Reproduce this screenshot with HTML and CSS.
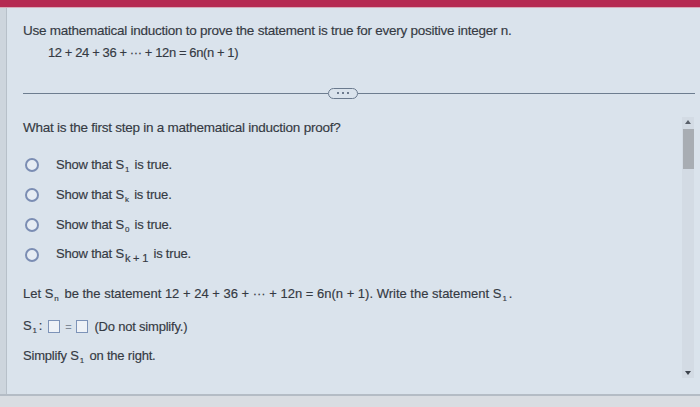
FILE: index.html
```html
<!DOCTYPE html>
<html>
<head>
<meta charset="utf-8">
<link rel="stylesheet" href="styles.css">
</head>
<body>
<div class="topbar"></div>
<div class="frame">
  <div class="leftstrip"></div>
  <div class="content">
    <div class="problem">
      <p class="intro">Use mathematical induction to prove the statement is true for every positive integer n.</p>
      <p class="eq">12 + 24 + 36 + ··· + 12n = 6n(n + 1)</p>
    </div>
    <div class="divider">
      <span class="line"></span>
      <span class="pill"><span></span><span></span><span></span></span>
      <span class="line"></span>
    </div>
    <div class="scrollarea">
      <div class="questions">
        <p class="q">What is the first step in a mathematical induction proof?</p>
        <ul class="options">
          <li><span class="radio"></span><span class="label">Show that S<sub>1</sub> is true.</span></li>
          <li><span class="radio"></span><span class="label">Show that S<sub>k</sub> is true.</span></li>
          <li><span class="radio"></span><span class="label">Show that S<sub>0</sub> is true.</span></li>
          <li><span class="radio"></span><span class="label">Show that S<sub class="big">k + 1</sub> is true.</span></li>
        </ul>
        <p class="let">Let S<sub>n</sub> be the statement 12 + 24 + 36 + ··· + 12n = 6n(n + 1). Write the statement S<sub>1</sub>.</p>
        <p class="s1"><span class="label">S<sub>1</sub>:</span><span class="box"></span><span class="eqsign">=</span><span class="box"></span><span class="label">(Do not simplify.)</span></p>
        <p class="simp">Simplify S<sub>1</sub> on the right.</p>
      </div>
      <div class="scrollbar">
        <span class="arrow up"></span>
        <span class="thumb"></span>
        <span class="track"></span>
        <span class="arrow down"></span>
      </div>
    </div>
  </div>
</div>
<div class="bottombar"></div>
</body>
</html>
```
FILE: styles.css
```css
html, body {
  margin: 0;
  padding: 0;
  width: 700px;
  height: 407px;
  overflow: hidden;
  background: #dae3ec;
  font-family: "Liberation Sans", Arial, sans-serif;
  color: #353a43;
  -webkit-text-stroke: 0.15px #353a43;
}
.topbar {
  height: 7px;
  background: #b52a52;
  border-bottom: 1px solid #d9a9b8;
}
.frame {
  display: flex;
  height: 386px;
  border-bottom: 2px solid #b4bcc5;
}
.leftstrip {
  width: 6px;
  background: #cdd5dd;
  border-right: 1px solid #b7c0c9;
}
.content {
  flex: 1;
  display: flex;
  flex-direction: column;
}
p { margin: 0; }
.problem {
  padding: 15px 0 0 16px;
  font-size: 13.5px;
}
.intro { letter-spacing: -0.25px; }
.eq {
  margin-top: 7px;
  padding-left: 25px;
  font-size: 13px;
  letter-spacing: -0.4px;
}
.divider {
  display: flex;
  align-items: center;
  margin: 27px 5px 0 16px;
  height: 12px;
}
.line {
  flex: 1;
  height: 1px;
  background: #6d7d8f;
}
.line:first-child { flex: 0 0 305px; }
.pill {
  width: 28px;
  height: 9px;
  border: 1.5px solid #6a7a8e;
  border-radius: 6px;
  display: flex;
  align-items: center;
  justify-content: center;
  gap: 3px;
}
.pill span {
  width: 2px;
  height: 2px;
  border-radius: 1px;
  background: #4a5a70;
}
.scrollarea {
  flex: 1;
  display: flex;
}
.questions {
  flex: 1;
  padding: 21px 0 0 16px;
  font-size: 13.5px;
}
.q { letter-spacing: -0.25px; }
.options {
  list-style: none;
  margin: 15px 0 0 0;
  padding: 0;
}
.options li {
  height: 30px;
  display: flex;
  align-items: center;
  font-size: 13px;
  letter-spacing: -0.2px;
}
.radio {
  width: 10px;
  height: 10px;
  border: 2px solid #7b8db3;
  border-radius: 50%;
  margin: 0 17px 0 2px;
  background: #e6ecf3;
  flex: none;
}
sub {
  font-size: 8px;
  vertical-align: -3px;
  margin: 0 2px 0 1px;
}
sub.big { font-size: 11px; vertical-align: -4px; margin-left: 1px; }
.let {
  margin-top: 16px;
  font-size: 13px;
  letter-spacing: 0;
}
.s1 {
  margin-top: 15px;
  font-size: 13px;
  display: flex;
  align-items: center;
  gap: 3px;
  letter-spacing: -0.2px;
}
.s1 .label:first-child { margin-right: 3px; }
.s1 .label:last-child { margin-left: 3px; }
.eqsign { font-size: 11px; color: #7f8a98; -webkit-text-stroke: 0; margin: 0 2px; }
.box {
  display: inline-block;
  width: 10px;
  height: 11px;
  border: 1.5px solid #7d93b8;
  background: #eef2f7;
}
.simp {
  margin-top: 13px;
  font-size: 13px;
  letter-spacing: -0.2px;
}
.scrollbar {
  width: 12px;
  margin: 18px 6px 16px 0;
  display: flex;
  flex-direction: column;
  align-items: center;
  background: #d3dbe4;
}
.arrow {
  width: 0;
  height: 0;
  border-left: 3px solid transparent;
  border-right: 3px solid transparent;
  margin: 3px 0;
}
.arrow.up { border-bottom: 4px solid #59606a; }
.arrow.down { border-top: 4px solid #3d444d; }
.thumb {
  width: 11px;
  height: 40px;
  background: #a8adb3;
  margin-top: 2px;
}
.track { flex: 1; }
.bottombar {
  height: 12px;
  background: #d9dde2;
}
```
